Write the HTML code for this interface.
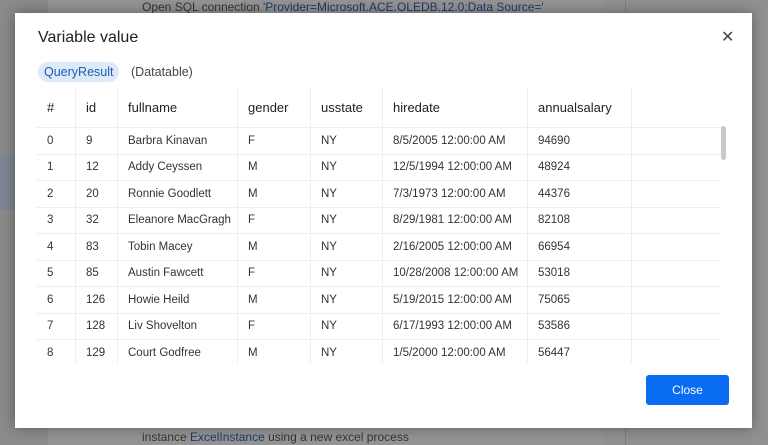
<!DOCTYPE html>
<html><head><style>
body{margin:0;width:768px;height:445px;overflow:hidden;background:#8c8c8c;font-family:"Liberation Sans",sans-serif;position:relative}
.bg1{position:absolute;left:0;top:0;width:768px;height:445px;background:#909090}
.bgtxt{position:absolute;font-size:12px;color:#333;white-space:nowrap}
.dlg{position:absolute;left:15px;top:13px;width:737px;height:415px;background:#fff;box-shadow:0 0 12px rgba(0,0,0,.35)}
.t{position:absolute;left:23px;top:16px;font-size:16px;color:#222}
.x{position:absolute;left:706px;top:14px;font-size:16px;color:#444}
.chip{position:absolute;left:23px;top:49px;background:#dfeaf8;color:#1a5fb4;font-size:12.5px;padding:3px 6px;border-radius:10px}
.dt{position:absolute;left:116px;top:52px;font-size:12.5px;color:#444}
table{position:absolute;left:22px;top:75px;border-collapse:collapse;font-size:11.5px;color:#333}
th{font-weight:normal;text-align:left;height:39px;font-size:13px;color:#222;padding:0 0 0 10px;border-right:1px solid #eee}
td{height:25.5px;padding:0 0 0 10px;border-right:1px solid #eee;border-top:1px solid #eee}
.clip{position:absolute;left:0;top:0;width:737px;height:350px;overflow:hidden}
.sb{position:absolute;left:706px;top:113px;width:5px;height:34px;background:#c8c8c8;border-radius:3px}
.btn{position:absolute;left:631px;top:362px;width:83px;height:30px;background:#0a6cf2;color:#fff;font-size:12px;text-align:center;line-height:30px;border-radius:3px}
</style></head><body>
<div class="bg1"></div>
<div style="position:absolute;left:0;top:0;width:48px;height:445px;background:#8a8a8a"></div>
<div style="position:absolute;left:48px;top:0;width:555px;height:445px;background:#939393"></div>
<div style="position:absolute;left:0;top:155px;width:15px;height:55px;background:#7d8594"></div>
<div style="position:absolute;left:625px;top:0;width:115px;height:445px;background:#8f8f8f;border-left:1px solid #7e7e7e"></div>
<div class="bgtxt" style="left:142px;top:0">Open SQL connection <span style="color:#1b3a6a">'Provider=Microsoft.ACE.OLEDB.12.0;Data Source='</span></div>
<div class="bgtxt" style="left:142px;top:430px">instance <span style="color:#1b3a6a">ExcelInstance</span> using a new excel process</div>
<div class="dlg">
<div class="t">Variable value</div>
<div class="x">✕</div>
<div class="chip">QueryResult</div>
<div class="dt">(Datatable)</div>
<div class="clip">
<table>
<tr><th style="width:28px">#</th><th style="width:31px">id</th><th style="width:109px">fullname</th><th style="width:62px">gender</th><th style="width:61px">usstate</th><th style="width:134px">hiredate</th><th style="width:93px">annualsalary</th><th style="width:79px;border:none"></th></tr>
<tr><td>0</td><td>9</td><td>Barbra Kinavan</td><td>F</td><td>NY</td><td>8/5/2005 12:00:00 AM</td><td>94690</td><td style="border-right:none"></td></tr>
<tr><td>1</td><td>12</td><td>Addy Ceyssen</td><td>M</td><td>NY</td><td>12/5/1994 12:00:00 AM</td><td>48924</td><td style="border-right:none"></td></tr>
<tr><td>2</td><td>20</td><td>Ronnie Goodlett</td><td>M</td><td>NY</td><td>7/3/1973 12:00:00 AM</td><td>44376</td><td style="border-right:none"></td></tr>
<tr><td>3</td><td>32</td><td>Eleanore MacGragh</td><td>F</td><td>NY</td><td>8/29/1981 12:00:00 AM</td><td>82108</td><td style="border-right:none"></td></tr>
<tr><td>4</td><td>83</td><td>Tobin Macey</td><td>M</td><td>NY</td><td>2/16/2005 12:00:00 AM</td><td>66954</td><td style="border-right:none"></td></tr>
<tr><td>5</td><td>85</td><td>Austin Fawcett</td><td>F</td><td>NY</td><td>10/28/2008 12:00:00 AM</td><td>53018</td><td style="border-right:none"></td></tr>
<tr><td>6</td><td>126</td><td>Howie Heild</td><td>M</td><td>NY</td><td>5/19/2015 12:00:00 AM</td><td>75065</td><td style="border-right:none"></td></tr>
<tr><td>7</td><td>128</td><td>Liv Shovelton</td><td>F</td><td>NY</td><td>6/17/1993 12:00:00 AM</td><td>53586</td><td style="border-right:none"></td></tr>
<tr><td>8</td><td>129</td><td>Court Godfree</td><td>M</td><td>NY</td><td>1/5/2000 12:00:00 AM</td><td>56447</td><td style="border-right:none"></td></tr>
</table>
</div>
<div class="sb"></div>
<div class="btn">Close</div>
</div>
</body></html>
